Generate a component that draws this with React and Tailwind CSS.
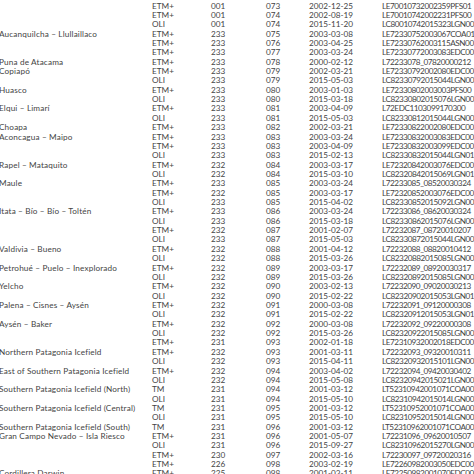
import React from "react";

const rows = [
  ["", "ETM+", "001", "073", "2002-12-25", "LE70010732002359PFS01"],
  ["", "ETM+", "001", "074", "2002-08-19", "LE70010742002231PFS00"],
  ["", "OLI", "001", "074", "2015-11-20", "LC80010742015323LGN00"],
  ["Aucanquilcha – Llullaillaco", "ETM+", "233", "075", "2003-03-08", "LE72330752003067COA01"],
  ["", "ETM+", "233", "076", "2003-04-25", "LE72330762003115ASN00"],
  ["", "ETM+", "233", "077", "2003-03-24", "LE72330772003083EDC00"],
  ["Puna de Atacama", "ETM+", "233", "078", "2000-02-12", "L72233078_07820000212"],
  ["Copiapó", "ETM+", "233", "079", "2002-03-21", "LE72330792002080EDC00"],
  ["", "OLI", "233", "079", "2015-05-03", "LC82330792015044LGN00"],
  ["Huasco", "ETM+", "233", "080", "2003-01-03", "LE72330802003003PFS00"],
  ["", "OLI", "233", "080", "2015-03-18", "LC82330802015076LGN00"],
  ["Elqui – Limarí", "ETM+", "233", "081", "2003-04-09", "L72EDC1103099170300"],
  ["", "OLI", "233", "081", "2015-05-03", "LC82330812015044LGN00"],
  ["Choapa", "ETM+", "233", "082", "2002-03-21", "LE72330822002080EDC00"],
  ["Aconcagua – Maipo", "ETM+", "233", "083", "2003-03-24", "LE72330832003083EDC00"],
  ["", "ETM+", "233", "083", "2003-04-09", "LE72330832003099EDC00"],
  ["", "OLI", "233", "083", "2015-02-13", "LC82330832015044LGN01"],
  ["Rapel – Mataquito", "ETM+", "232", "084", "2003-03-17", "LE72320842003076EDC00"],
  ["", "OLI", "232", "084", "2015-03-10", "LC82320842015069LGN01"],
  ["Maule", "ETM+", "233", "085", "2003-03-24", "L72233085_08520030324"],
  ["", "ETM+", "232", "085", "2003-03-17", "LE72320852003076EDC00"],
  ["", "OLI", "233", "085", "2015-04-02", "LC82330852015092LGN00"],
  ["Itata – Bío – Bío – Toltén", "ETM+", "233", "086", "2003-03-24", "L72233086_08620030324"],
  ["", "OLI", "233", "086", "2015-03-18", "LC82330862015076LGN00"],
  ["", "ETM+", "232", "087", "2001-02-07", "L72232087_08720010207"],
  ["", "OLI", "233", "087", "2015-05-03", "LC82330872015044LGN00"],
  ["Valdivia – Bueno", "ETM+", "232", "088", "2001-04-12", "L72232088_08820010412"],
  ["", "OLI", "232", "088", "2015-03-26", "LC82320882015085LGN00"],
  ["Petrohué – Puelo – Inexplorado", "ETM+", "232", "089", "2003-03-17", "L72232089_08920030317"],
  ["", "OLI", "232", "089", "2015-03-26", "LC82320892015085LGN00"],
  ["Yelcho", "ETM+", "232", "090", "2003-02-13", "L72232090_09020030213"],
  ["", "OLI", "232", "090", "2015-02-22", "LC82320902015053LGN01"],
  ["Palena – Cisnes – Aysén", "ETM+", "232", "091", "2000-03-08", "L72232091_09120000308"],
  ["", "OLI", "232", "091", "2015-02-22", "LC82320912015053LGN01"],
  ["Aysén – Baker", "ETM+", "232", "092", "2000-03-08", "L72232092_09220000308"],
  ["", "OLI", "232", "092", "2015-03-26", "LC82320922015085LGN00"],
  ["", "ETM+", "231", "093", "2002-01-18", "LE72310932002018EDC00"],
  ["Northern Patagonia Icefield", "ETM+", "232", "093", "2001-03-11", "L72232093_09320010311"],
  ["", "OLI", "232", "093", "2015-04-11", "LC82320932015101LGN00"],
  ["East of Southern Patagonia Icefield", "ETM+", "232", "094", "2003-04-02", "L72232094_09420030402"],
  ["", "OLI", "232", "094", "2015-05-08", "LC82320942015021LGN00"],
  ["Southern Patagonia Icefield (North)", "TM", "231", "094", "2001-03-12", "LT52310942001071COA00"],
  ["", "OLI", "231", "094", "2015-05-10", "LC82310942015014LGN00"],
  ["Southern Patagonia Icefield (Central)", "TM", "231", "095", "2001-03-12", "LT52310952001071COA00"],
  ["", "OLI", "231", "095", "2015-05-10", "LC82310952015014LGN00"],
  ["Southern Patagonia Icefield (South)", "TM", "231", "096", "2001-03-12", "LT52310962001071COA00"],
  ["Gran Campo Nevado – Isla Riesco", "ETM+", "231", "096", "2001-05-07", "L72231096_09620010507"],
  ["", "OLI", "231", "096", "2015-09-27", "LC82310962015270LGN00"],
  ["", "ETM+", "230", "097", "2002-03-16", "L72230097_09720020316"],
  ["", "ETM+", "226", "098", "2003-02-19", "LE72260982003050EDC00"],
  ["Cordillera Darwin", "ETM+", "225", "098", "2001-03-11", "LE72250982001070EDC00"],
];

export default function App() {
  return (
    <div
      className="w-[474px] h-[474px] overflow-hidden bg-white text-[#444] text-[8.2px] pt-[1.5px]"
      style={{ fontFamily: "Lato, 'Open Sans', sans-serif" }}
    >
      {rows.map((r, i) => (
        <div key={i} className="flex h-[9.36px] leading-[9.36px] whitespace-nowrap">
          <div className="w-[153px] -ml-px shrink-0 tracking-[0.15px]">{r[0]}</div>
          <div className="w-[59px] shrink-0">{r[1]}</div>
          <div className="w-[55px] shrink-0">{r[2]}</div>
          <div className="w-[43px] shrink-0">{r[3]}</div>
          <div className="w-[73px] shrink-0">{r[4]}</div>
          <div className="shrink-0 tracking-[-0.45px]">{r[5]}</div>
        </div>
      ))}
    </div>
  );
}
